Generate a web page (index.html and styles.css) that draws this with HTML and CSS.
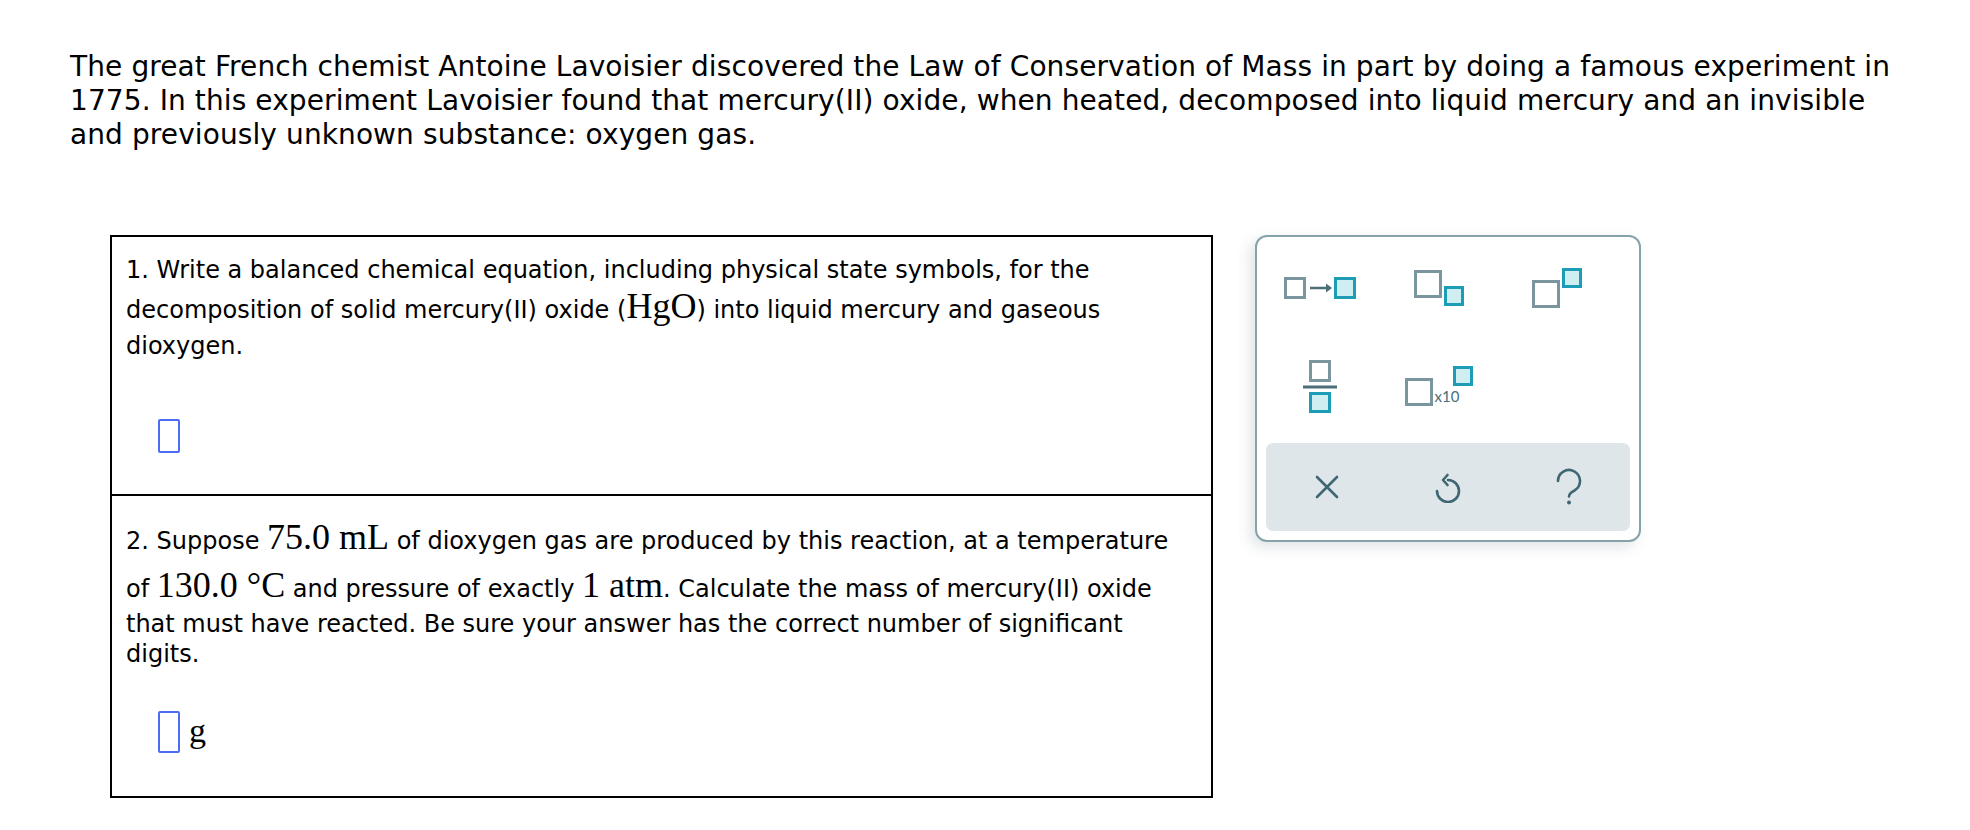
FILE: index.html
```html
<!DOCTYPE html>
<html lang="en">
<head>
<meta charset="utf-8">
<title>Lavoisier</title>
<link rel="stylesheet" href="styles.css">
</head>
<body>
<div class="page">
  <p class="intro">The great French chemist Antoine Lavoisier discovered the Law of Conservation of Mass in part by doing a famous experiment in 1775. In this experiment Lavoisier found that mercury(II) oxide, when heated, decomposed into liquid mercury and an invisible and previously unknown substance: oxygen gas.</p>

  <div class="work">
    <div class="qbox">
      <section class="q q1">
        <p class="qtext">1. Write a balanced chemical equation, including physical state symbols, for the decomposition of solid mercury(II) oxide (<span class="m m-desc">HgO</span>) into liquid mercury and gaseous dioxygen.</p>
        <div class="answer a1"><span class="slot"></span></div>
      </section>
      <section class="q q2">
        <p class="qtext">2. Suppose <span class="m">75.0 mL</span> of dioxygen gas are produced by this reaction, at a temperature of <span class="m">130.0 °C</span> and pressure of exactly <span class="m">1 atm</span>. Calculate the mass of mercury(II) oxide that must have reacted. Be sure your answer has the correct number of significant digits.</p>
        <div class="answer a2"><span class="slot slot-tall"></span><span class="unit">g</span></div>
      </section>
    </div>

    <div class="palette">
      <div class="pal-grid">
        <div class="cell">
          <svg width="72" height="22" viewBox="0 0 72 22">
            <rect x="1.5" y="1.5" width="19" height="19" class="sq-gray"/>
            <path d="M26 11H44" class="arrow-line"/>
            <path d="M42 6.5L48 11L42 15.5Z" class="arrow-head"/>
            <rect x="51.5" y="1.5" width="19" height="19" class="sq-teal"/>
          </svg>
        </div>
        <div class="cell">
          <svg width="50" height="36" viewBox="0 0 50 36">
            <rect x="1.5" y="1.5" width="25" height="25" class="sq-gray"/>
            <rect x="31.5" y="17.5" width="17" height="17" class="sq-teal"/>
          </svg>
        </div>
        <div class="cell">
          <svg width="50" height="40" viewBox="0 0 50 40">
            <rect x="1.5" y="13.5" width="25" height="25" class="sq-gray"/>
            <rect x="31.5" y="1.5" width="17" height="17" class="sq-teal"/>
          </svg>
        </div>
        <div class="cell">
          <svg width="34" height="53" viewBox="0 0 34 53">
            <rect x="7.5" y="1.5" width="19" height="19" class="sq-gray"/>
            <path d="M0 27H34" class="frac-line"/>
            <rect x="7.5" y="33.5" width="19" height="18" class="sq-teal"/>
          </svg>
        </div>
        <div class="cell">
          <svg width="68" height="40" viewBox="0 0 68 40">
            <rect x="1.5" y="13.5" width="25" height="25" class="sq-gray"/>
            <text x="29.5" y="36" class="x10">x10</text>
            <rect x="49.5" y="1.5" width="17" height="17" class="sq-teal"/>
          </svg>
        </div>
        <div class="cell"></div>
      </div>
      <div class="pal-actions">
        <svg width="24" height="24" viewBox="0 0 24 24">
          <path d="M2 2L22 22M22 2L2 22" class="act"/>
        </svg>
        <svg width="26" height="32" viewBox="0 0 26 32">
          <path d="M13 9A11 11 0 1 1 2 20" class="act"/>
          <path d="M12.5 4L8 9L12.5 14" class="act"/>
        </svg>
        <svg width="26" height="38" viewBox="0 0 26 38">
          <path d="M2 13A11 11 0 1 1 19 22.2Q13 25 13 28.5" class="act"/>
          <circle cx="13" cy="34.5" r="2" class="act-dot"/>
        </svg>
      </div>
    </div>
  </div>
</div>
</body>
</html>
```

FILE: styles.css
```css
* {
  box-sizing: border-box;
}

body {
  margin: 0;
  background: #ffffff;
  color: #000000;
  font-family: "DejaVu Sans", Verdana, sans-serif;
}

.page {
  padding: 50px 0 0 70px;
}

.intro {
  margin: 0;
  width: 1840px;
  font-size: 28px;
  line-height: 34px;
  letter-spacing: 0.1px;
}

.work {
  display: flex;
  align-items: flex-start;
  gap: 42px;
  margin: 83px 0 0 40px;
}

/* question box */
.qbox {
  width: 1103px;
  border: 2px solid #000;
}

.q {
  padding: 10px 25px 41px 14px;
}

.q1 {
  padding-top: 18px;
}

.q2 {
  border-top: 2px solid #000;
  padding-top: 17px;
  padding-bottom: 43px;
}

.qtext {
  margin: 0;
  font-size: 24px;
  line-height: 30px;
}

.m {
  font-family: "Liberation Serif", "Times New Roman", serif;
  font-size: 36px;
  line-height: 48px;
}

.m-desc {
  display: inline-block;
  line-height: 43px;
  padding-bottom: 3px;
}

.answer {
  display: flex;
  align-items: flex-start;
  padding-left: 32px;
}

.a1 {
  margin-top: 58px;
}

.a2 {
  margin-top: 42px;
}

.slot {
  display: block;
  width: 22px;
  height: 34px;
  border: 2px solid #4d6cf4;
  border-radius: 2px;
}

.slot-tall {
  height: 42px;
}

.unit {
  display: block;
  margin: 3px 0 0 9px;
  font-family: "Liberation Serif", "Times New Roman", serif;
  font-size: 34px;
  line-height: 34px;
}

/* palette */
.palette {
  width: 386px;
  height: 307px;
  background: #fff;
  border: 2px solid #86a3ab;
  border-radius: 12px;
  box-shadow: -5px 5px 14px rgba(60, 90, 100, 0.16);
}

.pal-grid {
  display: grid;
  grid-template-columns: repeat(3, 118.5px);
  grid-auto-rows: 98px;
  margin: 2px 0 0 4px;
}

.cell {
  display: flex;
  align-items: center;
  justify-content: center;
}

.cell svg,
.pal-actions svg {
  display: block;
}

.sq-gray {
  fill: #ffffff;
  stroke: #7a959e;
  stroke-width: 3;
}

.sq-teal {
  fill: #cfeef2;
  stroke: #1c9cb5;
  stroke-width: 3;
}

.arrow-line {
  stroke: #4b6e79;
  stroke-width: 2.5;
}

.arrow-head {
  fill: #4b6e79;
}

.frac-line {
  stroke: #4b6e79;
  stroke-width: 3;
}

.x10 {
  font-family: "Lato", "Open Sans", sans-serif;
  font-size: 15px;
  fill: #4b6e79;
}

.pal-actions {
  display: grid;
  grid-template-columns: repeat(3, 1fr);
  align-items: center;
  justify-items: center;
  height: 88px;
  margin: 8px 9px 0 9px;
  background: #dfe6e9;
  border-radius: 7px;
}

.act {
  fill: none;
  stroke: #3e6673;
  stroke-width: 2.6;
  stroke-linecap: round;
  stroke-linejoin: round;
}

.act-dot {
  fill: #3e6673;
}
```
